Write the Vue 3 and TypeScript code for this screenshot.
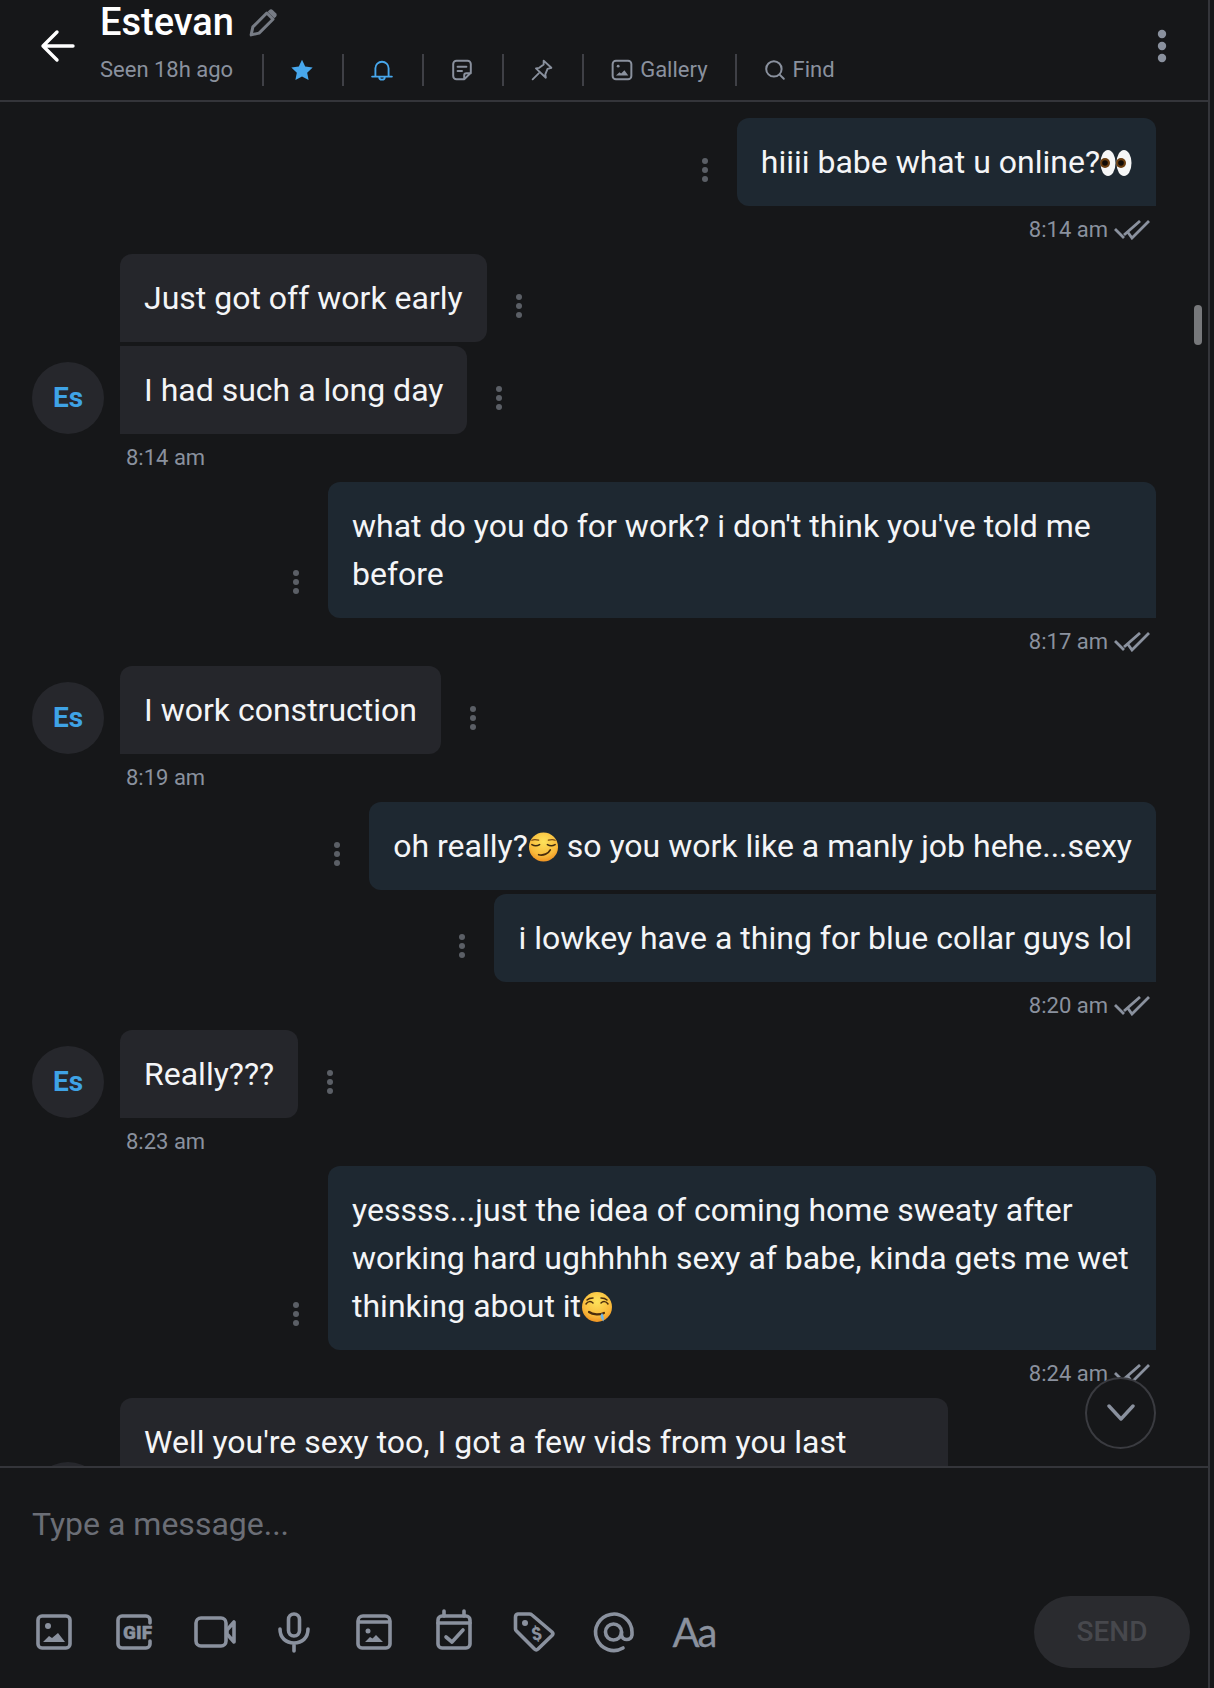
<script setup lang="ts">
type Part = { text?: string; emoji?: 'eyes' | 'smirk' | 'drool' }
type Bubble = { parts: Part[] }
type Group = { mine: boolean; bubbles: Bubble[]; time: string }

const t = (text: string): Part => ({ text })

const groups: Group[] = [
  { mine: true, time: '8:14 am', bubbles: [{ parts: [t('hiiii babe what u online?'), { emoji: 'eyes' }] }] },
  { mine: false, time: '8:14 am', bubbles: [{ parts: [t('Just got off work early')] }, { parts: [t('I had such a long day')] }] },
  { mine: true, time: '8:17 am', bubbles: [{ parts: [t("what do you do for work? i don't think you've told me before")] }] },
  { mine: false, time: '8:19 am', bubbles: [{ parts: [t('I work construction')] }] },
  {
    mine: true,
    time: '8:20 am',
    bubbles: [
      { parts: [t('oh really?'), { emoji: 'smirk' }, t(' so you work like a manly job hehe...sexy')] },
      { parts: [t('i lowkey have a thing for blue collar guys lol')] }
    ]
  },
  { mine: false, time: '8:23 am', bubbles: [{ parts: [t('Really???')] }] },
  {
    mine: true,
    time: '8:24 am',
    bubbles: [{ parts: [t('yessss...just the idea of coming home sweaty after working hard ughhhhh sexy af babe, kinda gets me wet thinking about it'), { emoji: 'drool' }] }]
  },
  { mine: false, time: '8:25 am', bubbles: [{ parts: [t("Well you're sexy too, I got a few vids from you last night")] }] }
]
</script>

<template>
  <div class="screen">
    <header class="header">
      <button class="back" aria-label="Back">
        <svg width="36" height="34" viewBox="0 0 36 34" fill="none" stroke="#fff" stroke-width="3.4" stroke-linecap="round" stroke-linejoin="round">
          <path d="M33 17H3M17 3 3 17l14 14" />
        </svg>
      </button>
      <div class="head-main">
        <div class="title-row">
          <span class="name">Estevan</span>
          <svg class="pencil" width="30" height="30" viewBox="0 0 28 28">
            <path d="M2 26l1.600-7.400L16.600 5.600l5.800 5.800L9.400 24.400Z" fill="none" stroke="#777c85" stroke-width="2.800" stroke-linejoin="round" />
            <path d="M19 2.800a2.200 2.200 0 0 1 3.100 0l3.100 3.100a2.200 2.200 0 0 1 0 3.100L23.600 10.600 17.400 4.400Z" fill="#777c85" />
          </svg>
        </div>
        <div class="meta">
          <span class="seen">Seen 18h ago</span>
          <span class="cell">
            <svg width="22" height="22" viewBox="0 0 20 20"><path d="M10 .6l2.900 6.300 6.800.8-5 4.700 1.300 6.800-6-3.400-6 3.400 1.300-6.800-5-4.700 6.800-.8Z" fill="#47a7ec" /></svg>
          </span>
          <span class="cell">
            <svg width="22" height="22" viewBox="0 0 20 20" fill="none" stroke="#47a7ec" stroke-width="1.700" stroke-linecap="round" stroke-linejoin="round">
              <path d="M4 16V8.500a6 6 0 0 1 12 0V16M1 16h18M7.500 16.500c0 3 5 3 5 0" />
            </svg>
          </span>
          <span class="cell">
            <svg width="22" height="22" viewBox="0 0 20 20" fill="none" stroke="#8a919e" stroke-width="1.800" stroke-linecap="round" stroke-linejoin="round">
              <path d="M12 18.500H5a3 3 0 0 1-3-3V4.500a3 3 0 0 1 3-3h10a3 3 0 0 1 3 3v8ZM12 18.500v-3.500a2 2 0 0 1 2-2h4M6 7h8M6 11h4" />
            </svg>
          </span>
          <span class="cell">
            <svg width="22" height="22" viewBox="0 0 20 20" fill="none" stroke="#8a919e" stroke-width="1.700" stroke-linecap="round" stroke-linejoin="round">
              <path d="M11.500 1.500l7 6.500-3.500 1-2 5 .5 3-9-8.500 3-.5 4-3ZM7 13l-5.500 5.500" />
            </svg>
          </span>
          <span class="cell wide">
            <svg width="22" height="22" viewBox="0 0 20 20" fill="none" stroke="#8a919e" stroke-width="1.800">
              <rect x="1.500" y="1.500" width="17" height="17" rx="3" />
              <circle cx="6.500" cy="6.500" r="1.300" fill="#8a919e" stroke="none" />
              <path d="M4.500 15l3.200-3 1.500 1.200 3-3 3.500 4.800Z" fill="#8a919e" stroke="none" />
            </svg>
            <span class="cell-label">Gallery</span>
          </span>
          <span class="cell">
            <svg width="22" height="22" viewBox="0 0 20 20" fill="none" stroke="#8a919e" stroke-width="1.800" stroke-linecap="round">
              <circle cx="9" cy="9" r="7" />
              <path d="M14.200 14.200 18 18" />
            </svg>
            <span class="cell-label">Find</span>
          </span>
        </div>
      </div>
      <svg class="menu" width="10" height="34" viewBox="0 0 10 34" fill="#8a919e">
        <circle cx="5" cy="5" r="4.200" />
        <circle cx="5" cy="17" r="4.200" />
        <circle cx="5" cy="29" r="4.200" />
      </svg>
    </header>

    <section class="messages">
      <div v-for="(group, g) in groups" :key="g" class="group" :class="group.mine ? 'mine' : 'theirs'">
        <div class="group-body">
          <div v-if="!group.mine" class="avatar">Es</div>
          <div class="stack">
            <div v-for="(bubble, b) in group.bubbles" :key="b" class="row">
              <svg class="kebab" width="8" height="24" viewBox="0 0 8 24" fill="#5b5f66">
                <circle cx="4" cy="3" r="3" />
                <circle cx="4" cy="12" r="3" />
                <circle cx="4" cy="21" r="3" />
              </svg>
              <div class="bubble" :class="{ first: b === 0 }">
                <template v-for="(part, p) in bubble.parts" :key="p">
                  <template v-if="part.text">{{ part.text }}</template>
                  <svg v-else-if="part.emoji === 'eyes'" class="emoji" width="32" height="30" viewBox="0 0 32 30">
                    <ellipse cx="8" cy="15" rx="7.500" ry="13" fill="#f6f6f6" />
                    <ellipse cx="24" cy="15" rx="7.500" ry="13" fill="#f6f6f6" />
                    <circle cx="5" cy="15" r="5" fill="#6b3f12" />
                    <circle cx="21" cy="15" r="5" fill="#6b3f12" />
                    <circle cx="5" cy="15" r="2.800" fill="#120b06" />
                    <circle cx="21" cy="15" r="2.800" fill="#120b06" />
                  </svg>
                  <svg v-else-if="part.emoji === 'smirk'" class="emoji" width="31" height="30" viewBox="0 0 32 30">
                    <defs>
                      <radialGradient id="face-a" cx="50%" cy="32%" r="70%">
                        <stop offset="0" stop-color="#fde25b" />
                        <stop offset="0.7" stop-color="#f9b93a" />
                        <stop offset="1" stop-color="#ee8f1f" />
                      </radialGradient>
                    </defs>
                    <circle cx="16" cy="15" r="15" fill="url(#face-a)" />
                    <path d="M4 8c2-1 4-1 7 0M21 8c3-1 5-1 7 0" fill="none" stroke="#7a4a10" stroke-width="1.300" stroke-linecap="round" />
                    <path d="M4 12.500c2.500 1.500 5.500 1.500 8 0M20 12.500c2.500 1.500 5.500 1.500 8 0" fill="none" stroke="#3d2a10" stroke-width="1.600" stroke-linecap="round" />
                    <path d="M11 23c5 1 10-1 12-5" fill="none" stroke="#4a2c0c" stroke-width="1.800" stroke-linecap="round" />
                  </svg>
                  <svg v-else class="emoji" width="32" height="30" viewBox="0 0 32 30">
                    <defs>
                      <radialGradient id="face-b" cx="50%" cy="32%" r="70%">
                        <stop offset="0" stop-color="#fde25b" />
                        <stop offset="0.7" stop-color="#f9b93a" />
                        <stop offset="1" stop-color="#ee8f1f" />
                      </radialGradient>
                    </defs>
                    <circle cx="16" cy="15" r="15" fill="url(#face-b)" />
                    <path d="M5 12c2-3 5-3 7-1M20 11c2-2 5-2 7 1M6 8c2-2 4-2 6-2M20 6c2 0 4 0 6 2" fill="none" stroke="#4a2c0c" stroke-width="1.500" stroke-linecap="round" />
                    <path d="M8 20c4 3 11 3 15 1" fill="none" stroke="#4a2c0c" stroke-width="2.200" stroke-linecap="round" />
                    <path d="M21 21c2 3 2 5 1.500 8.500-2-2-3-4-3-6Z" fill="#6db6e8" />
                  </svg>
                </template>
              </div>
            </div>
          </div>
        </div>
        <div class="time-row">
          <span class="time">{{ group.time }}</span>
          <svg v-if="group.mine" class="checks" width="36" height="20" viewBox="0 0 36 20" fill="none" stroke="#8a919e" stroke-width="2.800">
            <path d="M1 9l9 9M10 15 26 1M13 11l5 7L35 1" />
          </svg>
        </div>
      </div>

      <span class="scroll-thumb"></span>
      <button class="to-bottom" aria-label="Scroll to bottom">
        <svg width="28" height="18" viewBox="0 0 28 18" fill="none" stroke="#8a919e" stroke-width="3.400" stroke-linecap="round" stroke-linejoin="round">
          <path d="M2 2l12 13L26 2" />
        </svg>
      </button>
    </section>

    <footer class="composer">
      <div class="placeholder">Type a message...</div>
      <div class="toolbar">
        <div class="tools">
          <span class="tool">
            <svg class="ico" viewBox="0 0 48 48">
              <rect x="8" y="8" width="32" height="32" rx="4" />
              <circle class="solid" cx="18" cy="18" r="3" />
              <path class="solid" d="M13 34l6-6 3 2 6-5 7 9Z" />
            </svg>
          </span>
          <span class="tool">
            <svg class="ico" viewBox="0 0 48 48">
              <path d="M40 15v-3a4 4 0 0 0-4-4H12a4 4 0 0 0-4 4v24a4 4 0 0 0 4 4h24a4 4 0 0 0 4-4v-3" />
              <text class="gif" x="13" y="31" textLength="29" lengthAdjust="spacingAndGlyphs">GIF</text>
            </svg>
          </span>
          <span class="tool">
            <svg class="ico shift" viewBox="0 0 48 48">
              <rect x="5" y="10" width="30" height="28" rx="5" />
              <path d="M36 22l7-8v20l-7-8Z" />
            </svg>
          </span>
          <span class="tool">
            <svg class="ico" viewBox="0 0 48 48">
              <rect x="18.500" y="6" width="11" height="22" rx="5.500" />
              <path d="M10 21c0 9 6 14 14 14s14-5 14-14M24 35v8" />
            </svg>
          </span>
          <span class="tool">
            <svg class="ico" viewBox="0 0 48 48">
              <path d="M8 13a5 5 0 0 1 5-5h22a5 5 0 0 1 5 5v23a4 4 0 0 1-4 4H12a4 4 0 0 1-4-4ZM8 14h32" />
              <circle class="solid" cx="18" cy="23" r="2.500" />
              <path class="solid" d="M15 34l5-5 2.500 1.500 3.500-3.500 7 7Z" />
            </svg>
          </span>
          <span class="tool">
            <svg class="ico" viewBox="0 0 48 48">
              <rect x="8" y="8" width="32" height="32" rx="4" />
              <path d="M8 15h32M14 3v5M34 3v5" />
              <path d="M16 29l6 5 11-12" />
            </svg>
          </span>
          <span class="tool">
            <svg class="ico" viewBox="0 0 48 48">
              <path d="M8 6h11a4 4 0 0 1 3 1l20 17a2.500 2.500 0 0 1 0 3.500L28 41a2.500 2.500 0 0 1-3.500 0L6.500 23a3 3 0 0 1-1-2V9a3 3 0 0 1 2.500-3Z" />
              <circle class="solid" cx="15" cy="15" r="3" />
              <text class="dollar" x="26.500" y="32" transform="rotate(-12 26.500 26)">$</text>
            </svg>
          </span>
          <span class="tool">
            <svg class="ico" viewBox="0 0 48 48">
              <circle cx="23.500" cy="24" r="8" />
              <path d="M31.500 24v3a5.300 5.300 0 0 0 10.500 0v-3a18.200 18.200 0 1 0-9 16" />
            </svg>
          </span>
          <span class="tool aa">Aa</span>
        </div>
        <button class="send">SEND</button>
      </div>
    </footer>
  </div>
</template>

<style scoped>
.screen {
  width: 1208px;
  height: 1688px;
  border-right: 2px solid #34353a;
  display: flex;
  flex-direction: column;
  overflow: hidden;
  background: #161719;
  font-family: Roboto, 'Noto Sans', sans-serif;
  color: #f4f5f7;
}
button {
  padding: 0;
  background: none;
  border: 0;
  font-family: inherit;
}

.header {
  flex: none;
  display: flex;
  align-items: center;
  padding: 0 41px 8px 40px;
  height: 92px;
  border-bottom: 2px solid #34353a;
}
.back {
  width: 36px;
  height: 34px;
  margin-right: 24px;
}
.back svg {
  display: block;
}
.head-main {
  align-self: flex-start;
  flex: 1;
}
.title-row {
  height: 44px;
  display: flex;
  align-items: center;
  gap: 15px;
}
.name {
  font-size: 38px;
  font-weight: 500;
  line-height: 44px;
  color: #fff;
}
.pencil {
  margin-top: -1px;
}
.meta {
  margin-top: 10px;
  height: 32px;
  display: flex;
  align-items: center;
  font-size: 22px;
  color: #8a919e;
}
.seen {
  padding-right: 29px;
  margin-top: -2px;
}
.cell {
  height: 32px;
  display: flex;
  align-items: center;
  gap: 7px;
  padding: 0 29px 0 27px;
  border-left: 2px solid #3f4046;
}
.cell.wide {
  padding-right: 27px;
}
.cell-label {
  margin-top: -2px;
}
.menu {
  display: block;
}

.messages {
  flex: 1;
  min-height: 0;
  position: relative;
  overflow: hidden;
  padding: 16px 52px 0 32px;
}
.group {
  display: flex;
  flex-direction: column;
}
.group-body {
  display: flex;
  align-items: flex-end;
  gap: 16px;
}
.mine .group-body {
  justify-content: flex-end;
}
.avatar {
  width: 72px;
  height: 72px;
  flex: none;
  box-sizing: border-box;
  padding-bottom: 2px;
  border-radius: 50%;
  background: #26272c;
  color: #3fa3e6;
  font-size: 28px;
  font-weight: 700;
  display: flex;
  align-items: center;
  justify-content: center;
}
.stack {
  display: flex;
  flex-direction: column;
  gap: 4px;
}
.mine .stack {
  align-items: flex-end;
}
.theirs .stack {
  align-items: flex-start;
}
.row {
  display: flex;
  align-items: flex-end;
  gap: 28px;
}
.theirs .row {
  flex-direction: row-reverse;
}
.kebab {
  flex: none;
  margin-bottom: 24px;
}
.bubble {
  max-width: 828px;
  box-sizing: border-box;
  padding: 20px 24px;
  font-size: 32px;
  line-height: 48px;
  color: #f4f5f7;
}
.mine .bubble {
  background: #1e2831;
  border-radius: 12px 0 0 12px;
}
.mine .bubble.first {
  border-top-right-radius: 12px;
}
.theirs .bubble {
  background: #25262b;
  border-radius: 0 12px 12px 0;
}
.theirs .bubble.first {
  border-top-left-radius: 12px;
}
.emoji {
  vertical-align: -5px;
}
.time-row {
  height: 30px;
  margin: 8px 0 10px;
  display: flex;
  align-items: center;
  font-size: 22px;
  color: #8a919e;
}
.mine .time-row {
  justify-content: flex-end;
  gap: 6px;
  padding-right: 6px;
}
.theirs .time-row {
  padding-left: 94px;
}
.checks {
  flex: none;
  margin-top: 2px;
}
.scroll-thumb {
  position: absolute;
  top: 203px;
  right: 6px;
  width: 8px;
  height: 40px;
  border-radius: 4px;
  background: #77787b;
}
.to-bottom {
  position: absolute;
  right: 52px;
  bottom: 17px;
  width: 71px;
  height: 72px;
  border: 2px solid #3a3b40;
  border-radius: 50%;
  background: #161719;
  display: flex;
  align-items: center;
  justify-content: center;
}

.composer {
  flex: none;
  height: 222px;
  box-sizing: border-box;
  border-top: 2px solid #34353a;
}
.placeholder {
  height: 112px;
  padding-left: 32px;
  display: flex;
  align-items: center;
  font-size: 32px;
  color: #6b6e76;
}
.toolbar {
  display: flex;
  align-items: center;
  justify-content: space-between;
  padding: 12px 18px 0 14px;
}
.tools {
  display: flex;
}
.tool {
  width: 80px;
  height: 80px;
  display: flex;
  align-items: center;
  justify-content: center;
}
.ico {
  width: 48px;
  height: 48px;
  fill: none;
  stroke: #8a919e;
  stroke-width: 3.6;
  stroke-linecap: round;
  stroke-linejoin: round;
}
.ico.shift {
  margin-left: 2px;
}
.ico .solid {
  fill: #8a919e;
  stroke: none;
}
.gif {
  font-family: Roboto, sans-serif;
  font-size: 19px;
  font-weight: 900;
  fill: #8a919e;
  stroke: #8a919e;
  stroke-width: 0.4;
}
.dollar {
  font-family: Roboto, sans-serif;
  font-size: 18px;
  font-weight: 900;
  fill: #8a919e;
  stroke: none;
  text-anchor: middle;
}
.aa {
  font-family: Lato, sans-serif;
  font-size: 40px;
  letter-spacing: -2px;
  color: #8a919e;
  -webkit-text-stroke: 0.3px #8a919e;
}
.send {
  width: 156px;
  height: 72px;
  padding-bottom: 2px;
  border-radius: 36px;
  background: #2a2b2f;
  color: #47484d;
  font-size: 28px;
  font-weight: 500;
}
</style>

<style>
html,
body {
  margin: 0;
  background: #161719;
}
</style>
